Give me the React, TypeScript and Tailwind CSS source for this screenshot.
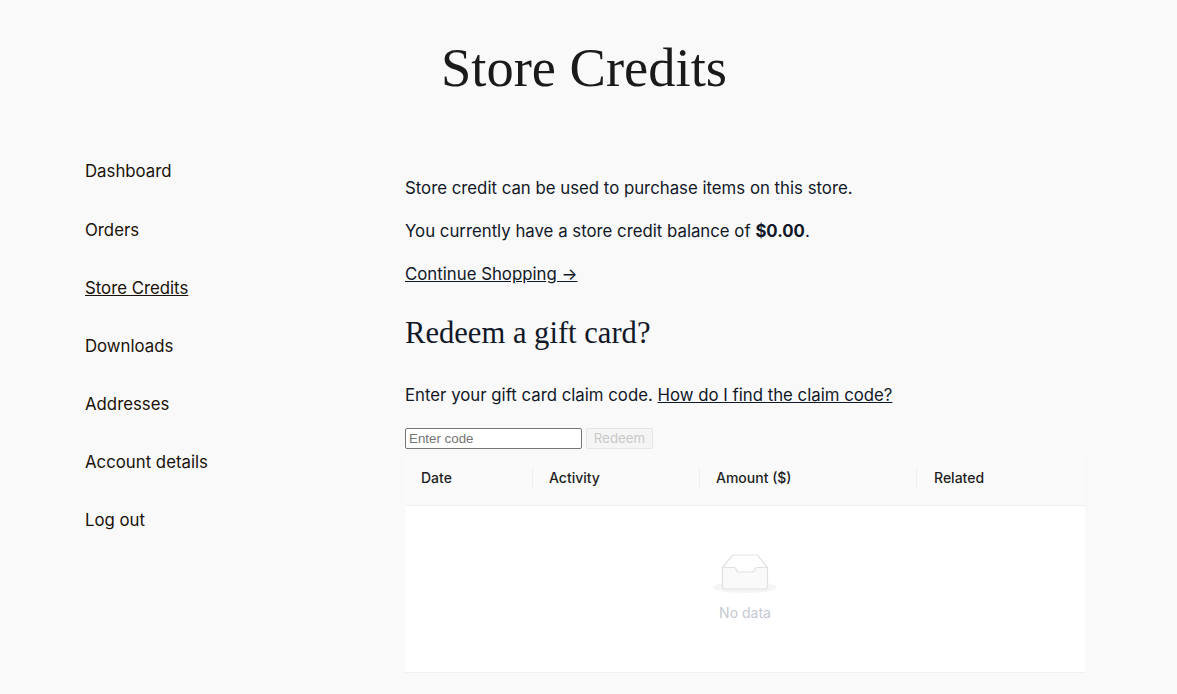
export default function App() {
  const nav = ["Dashboard", "Orders", "Store Credits", "Downloads", "Addresses", "Account details", "Log out"];
  return (
    <div className="h-[694px] overflow-hidden bg-[#f9f9f9] text-[#111827] font-['Inter',sans-serif] text-[16.8px]">
      <h1 className="pt-[30px] pr-[9px] h-[142px] text-center font-['Liberation_Serif',serif] text-[54.5px] leading-[76px] text-[#1a1a1a]">
        Store Credits
      </h1>
      <div className="flex pl-[85px] pr-[92px]">
        <nav className="w-[320px] shrink-0 flex flex-col gap-[34px] pt-[17.4px]">
          {nav.map((n) => (
            <a key={n} className={"h-[24.16px] leading-[24px] text-[#1a1208] " + (n === "Store Credits" ? "underline" : "")}>
              {n}
            </a>
          ))}
        </nav>
        <main className="w-[680px] pt-[34px]">
          <p className="leading-6">Store credit can be used to purchase items on this store.</p>
          <p className="leading-6 mt-[19px]">
            You currently have a store credit balance of <b>$0.00</b>.
          </p>
          <p className="leading-6 mt-[19px]">
            <a className="underline">Continue Shopping →</a>
          </p>
          <h2 className="mt-[27px] font-['Liberation_Serif',serif] text-[30.6px] leading-[40px]">Redeem a gift card?</h2>
          <p className="leading-6 mt-[30px]">
            Enter your gift card claim code. <a className="underline">How do I find the claim code?</a>
          </p>
          <div className="flex items-center gap-[4px] mt-[21px] h-[21px]">
            <input
              placeholder="Enter code"
              className="w-[177px] h-[21px] box-border border border-[#767676] rounded-[2px] bg-white px-[3px] font-['Liberation_Sans',sans-serif] text-[13.33px] placeholder:text-[#757575] outline-none"
            />
            <button className="w-[67px] h-[21px] box-border border border-[#e5e5e5] rounded-[2px] bg-[#f5f5f5] text-[#c9c9c9] text-[13.33px] leading-none">
              Redeem
            </button>
          </div>
          <div className="bg-white mt-[5px]">
            <div className="flex h-[52px] pb-[4px] items-center bg-[#fafafa] border-b border-[#f0f0f0] text-sm font-medium text-[#1f1f1f]">
              <div className="w-[128px] h-[22px] pl-4 leading-[22px] border-r border-[#f0f0f0]">Date</div>
              <div className="w-[167px] h-[22px] pl-4 leading-[22px] border-r border-[#f0f0f0]">Activity</div>
              <div className="w-[217px] h-[22px] pl-4 leading-[22px] border-r border-[#f0f0f0]">Amount ($)</div>
              <div className="flex-1 h-[22px] pl-[17px] leading-[22px]">Related</div>
            </div>
            <div className="h-[167px] border-b border-[#f0f0f0] flex flex-col items-center pt-[47px]">
              <svg width="64" height="41" viewBox="0 0 64 41" className="block">
                <ellipse cx="32" cy="34.5" rx="32" ry="5.5" fill="#f5f5f5" />
                <path d="M9.500 14.500 19 2.800a2 2 0 0 1 1.500-.8h23a2 2 0 0 1 1.500.8L54.500 14.500" fill="#fff" stroke="#e1e1e1" strokeWidth="1.200" />
                <path d="M9.500 14.500h11.500c1.500 0 2 .8 2.200 1.900.3 1.500 1.300 2.600 2.800 2.600h13c1.500 0 2.500-1.100 2.800-2.600.2-1.100.7-1.900 2.200-1.900h10.500v19a2.500 2.500 0 0 1-2.500 2.500h-40a2.500 2.500 0 0 1-2.500-2.500z" fill="#fafafa" stroke="#e1e1e1" strokeWidth="1.200" />
              </svg>
              <div className="text-sm leading-[22px] mt-[8px] text-[#c4c9d1]">No data</div>
            </div>
          </div>
        </main>
      </div>
    </div>
  );
}
